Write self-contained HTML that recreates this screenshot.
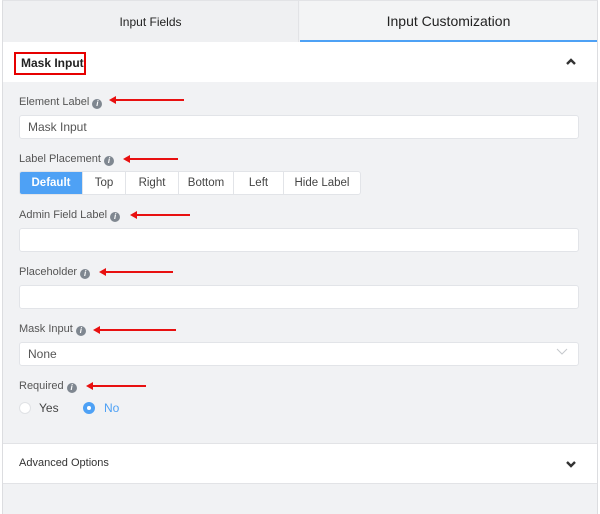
<!DOCTYPE html>
<html><head><style>
*{box-sizing:border-box;margin:0;padding:0}
body{width:600px;height:514px;background:#fff;font-family:"Liberation Sans",sans-serif;position:relative;overflow:hidden;color:#444}
.wrap{position:absolute;left:2px;top:0;width:596px;height:514px;background:#f1f2f4;border-left:1px solid #dcdde0;border-right:1px solid #dcdde0;border-top:1px solid #e2e3e6}
.a{position:absolute;white-space:nowrap}
.tab{top:0;height:41px;display:flex;align-items:center;justify-content:center;color:#222}
.lbl{font-size:11px;color:#555;left:16px}
.info{display:inline-block;width:10px;height:10px;border-radius:50%;background:#7f8790;color:#fff;font-size:8px;font-weight:bold;text-align:center;line-height:10px;vertical-align:-1px;margin-left:3px;font-style:italic}
.inp{left:16px;width:560px;height:24px;background:#fff;border:1px solid #e2e4e8;border-radius:3px;font-size:12px;color:#555;padding-left:8px;line-height:22px}
.arr{height:2px;background:#e81010}
.arr:before{content:"";position:absolute;left:-5px;top:-3px;border-right:7px solid #e81010;border-top:4px solid transparent;border-bottom:4px solid transparent}
.bg{left:16px;top:170px;height:24px;display:flex;border:1px solid #e2e4e8;border-radius:3px;background:#fff;font-size:11.5px;overflow:hidden}
.bg div{display:flex;align-items:center;justify-content:center;border-left:1px solid #e2e4e8;color:#444}
</style></head><body>
<div class="wrap">
<div class="a tab" style="left:0;width:296px;background:#eff0f2;font-size:12px;border-right:1px solid #e2e3e6">Input Fields</div>
<div class="a tab" style="left:297px;width:297px;background:#f3f4f5;font-size:14px;border-bottom:2px solid #4ea1f5">Input Customization</div>
<div class="a" style="left:0;top:41px;width:594px;height:40px;background:#fff"></div>
<div class="a" style="left:11px;top:51px;width:72px;height:23px;border:2px solid #e60000;font-size:12px;font-weight:bold;color:#222;padding-left:5px;line-height:19px">Mask Input</div>
<svg class="a" style="left:562px;top:56px" width="12" height="9"><path d="M2 7L6 3L10 7" stroke="#333" stroke-width="2.4" fill="none"/></svg>

<div class="a lbl" style="top:95px">Element Label<span class="info">i</span></div>
<div class="a arr" style="left:111px;top:98px;width:70px"></div>
<div class="a inp" style="top:114px">Mask Input</div>

<div class="a lbl" style="top:152px">Label Placement<span class="info">i</span></div>
<div class="a arr" style="left:125px;top:157px;width:50px"></div>
<div class="a bg">
<div style="width:62px;background:#4ea1f5;color:#fff;font-weight:bold;border-left:none">Default</div>
<div style="width:43px">Top</div>
<div style="width:53px">Right</div>
<div style="width:55px">Bottom</div>
<div style="width:50px">Left</div>
<div style="width:77px">Hide Label</div>
</div>

<div class="a lbl" style="top:208px">Admin Field Label<span class="info">i</span></div>
<div class="a arr" style="left:132px;top:213px;width:55px"></div>
<div class="a inp" style="top:227px"></div>

<div class="a lbl" style="top:265px">Placeholder<span class="info">i</span></div>
<div class="a arr" style="left:101px;top:270px;width:69px"></div>
<div class="a inp" style="top:284px"></div>

<div class="a lbl" style="top:322px">Mask Input<span class="info">i</span></div>
<div class="a arr" style="left:95px;top:328px;width:78px"></div>
<div class="a inp" style="top:341px">None</div>
<svg class="a" style="left:553px;top:347px" width="12" height="8"><path d="M1 1L6 6L11 1" stroke="#c5c8cc" stroke-width="1" fill="none"/></svg>

<div class="a lbl" style="top:379px">Required<span class="info">i</span></div>
<div class="a arr" style="left:88px;top:384px;width:55px"></div>
<div class="a" style="left:16px;top:401px;width:12px;height:12px;border-radius:50%;background:#fff;border:1px solid #e0e2e5"></div>
<div class="a" style="left:36px;top:400px;font-size:12px;color:#444">Yes</div>
<div class="a" style="left:80px;top:401px;width:12px;height:12px;border-radius:50%;background:#4ea1f5"><div style="margin:4px;width:4px;height:4px;border-radius:50%;background:#fff"></div></div>
<div class="a" style="left:101px;top:400px;font-size:12px;color:#4ea1f5">No</div>

<div class="a" style="left:0;top:442px;width:594px;height:41px;background:#fff;border-top:1px solid #e2e3e6;border-bottom:1px solid #e2e3e6"></div>
<div class="a" style="left:16px;top:456px;font-size:11px;color:#333">Advanced Options</div>
<svg class="a" style="left:562px;top:459px" width="12" height="9"><path d="M2 2L6 6L10 2" stroke="#333" stroke-width="2.4" fill="none"/></svg>
</div>
</body></html>
